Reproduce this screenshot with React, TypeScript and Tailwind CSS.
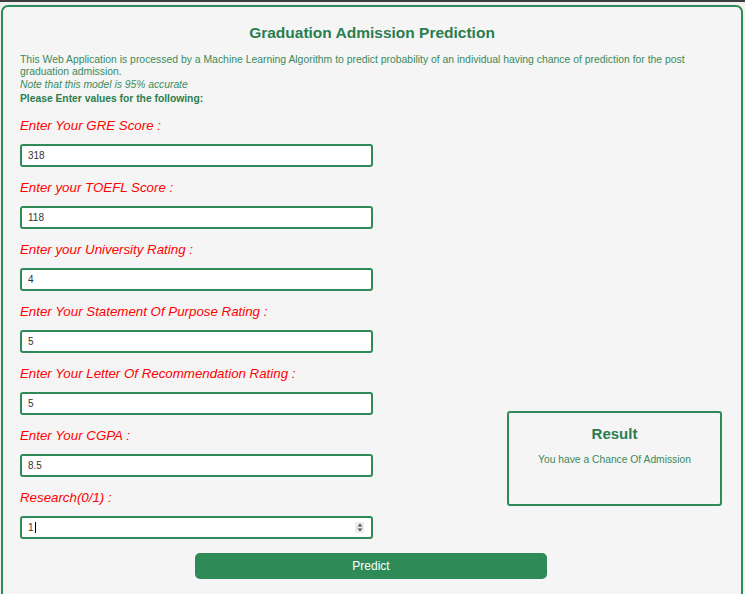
import React from "react";

const fields: { label: string; value: string }[] = [
  { label: "Enter Your GRE Score :", value: "318" },
  { label: "Enter your TOEFL Score :", value: "118" },
  { label: "Enter your University Rating :", value: "4" },
  { label: "Enter Your Statement Of Purpose Rating :", value: "5" },
  { label: "Enter Your Letter Of Recommendation Rating :", value: "5" },
  { label: "Enter Your CGPA :", value: "8.5" },
];

export default function App() {
  return (
    <div className="w-[745px] h-[594px] overflow-hidden bg-[#f0f0f0] font-['Liberation_Sans',Arial,sans-serif]">
      <div className="h-[2px] bg-[#3c3c3c]" />
      <div className="mt-[3px] ml-[1px] w-[742px] h-[620px] rounded-[7px] border-2 border-[#2e8b57] bg-[#f5f5f5]">
        <h2 className="pt-[17px] text-center text-[15.5px] leading-[18px] font-bold text-[#2a7d4f]">
          Graduation Admission Prediction
        </h2>
        <div className="px-[17px]">
          <p className="mt-[12px] text-[10.4px] leading-[11.5px] text-[#3a8a5c]">
            This Web Application is processed by a Machine Learning Algorithm to predict probability of an individual having chance of prediction for the post graduation admission.
          </p>
          <p className="mt-[2px] text-[10.3px] leading-[12px] italic text-[#3a8a5c]">
            Note that this model is 95% accurate
          </p>
          <p className="mt-[2px] text-[10.3px] leading-[12px] font-bold text-[#2a7d4f]">
            Please Enter values for the following:
          </p>
        </div>
        <div className="flex items-start pl-[17px] pr-[19px]">
          <div className="w-[353px] flex flex-col">
            {fields.map((f, i) => (
              <div key={i} className="flex flex-col">
                <label className="mt-[13px] text-[13.3px] leading-[16px] italic text-[#ff0000]">{f.label}</label>
                <input
                  readOnly
                  value={f.value}
                  className="mt-[10px] h-[23px] w-[353px] rounded-[3px] border-2 border-[#2e8b57] bg-white px-[6px] text-[10px] text-[#333333] outline-none"
                />
              </div>
            ))}
            <div className="flex flex-col">
              <label className="mt-[13px] text-[13.3px] leading-[16px] italic text-[#ff0000]">Research(0/1) :</label>
              <div className="relative mt-[10px] h-[23px] w-[353px] rounded-[3px] border-2 border-[#2e8b57] bg-white flex items-center px-[6px]">
                <span className="text-[10px] text-[#333333] leading-none">1</span>
                <span className="ml-[1px] h-[11px] w-[1px] bg-black" />
                <div className="absolute right-[7px] top-[4px] h-[11px] w-[9px] bg-[#ececec] flex items-center justify-center">
                  <svg width="6" height="9" viewBox="0 0 6 9">
                    <path d="M3 0.5 L5.5 3.5 L0.5 3.5 Z" fill="#555" />
                    <path d="M3 8.5 L5.5 5.5 L0.5 5.5 Z" fill="#555" />
                  </svg>
                </div>
              </div>
            </div>
          </div>
          <div className="ml-auto mt-[306px] w-[215px] h-[95px] rounded-[3px] border-2 border-[#2e8b57] flex flex-col items-center">
            <h3 className="mt-[12px] text-[15px] leading-[18px] font-bold text-[#2a7d4f]">Result</h3>
            <p className="mt-[10px] text-[10.3px] leading-[13px] text-[#3a8a5c]">You have a Chance Of Admission</p>
          </div>
        </div>
        <div className="flex justify-center mt-[14px]">
          <button className="ml-[-2px] w-[352px] h-[26px] rounded-[5px] bg-[#2e8b57] text-white text-[12px]">Predict</button>
        </div>
      </div>
    </div>
  );
}
